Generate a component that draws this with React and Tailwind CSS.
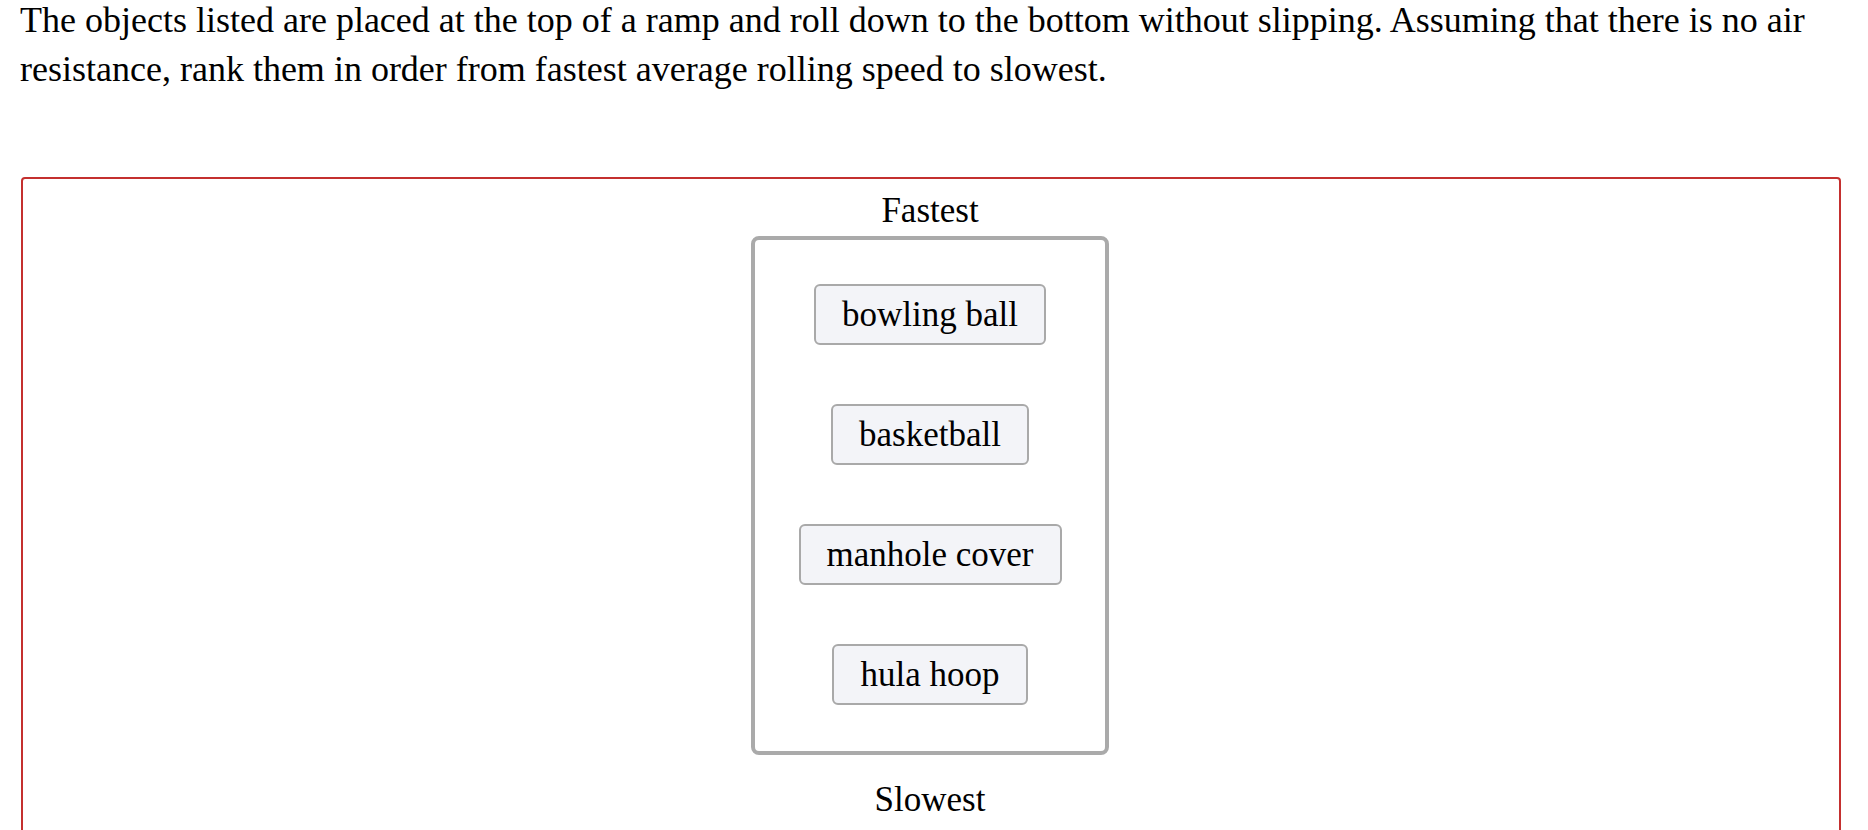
const items = ["bowling ball", "basketball", "manhole cover", "hula hoop"];

function RankItem({ label }) {
  return (
    <div className="border-2 border-[#a9a9a9] bg-[#f3f4f8] rounded-[6px] px-[26px] py-[4px] whitespace-nowrap">
      {label}
    </div>
  );
}

export default function App() {
  return (
    <div className="min-h-screen bg-white text-black font-['Liberation_Serif','Times_New_Roman',serif] text-[35px] leading-[49px]">
      <p className="px-[20px] -mt-[4px] text-[36px]">
        The objects listed are placed at the top of a ramp and roll down to the bottom without slipping. Assuming that there is no air resistance, rank them in order from fastest average rolling speed to slowest.
      </p>

      <div className="ml-[21px] mr-[27px] mt-[83px] border-2 border-[#c4302f] rounded-[4px] pt-[7px] pb-[40px] pr-[2px] flex flex-col items-center">
        <div>Fastest</div>
        <div className="mt-[1px] w-[358px] border-4 border-[#aaaaaa] rounded-[8px] pt-[44px] pb-[46px] flex flex-col items-center gap-[59px]">
          {items.map((it) => (
            <RankItem key={it} label={it} />
          ))}
        </div>
        <div className="mt-[20px]">Slowest</div>
      </div>
    </div>
  );
}
